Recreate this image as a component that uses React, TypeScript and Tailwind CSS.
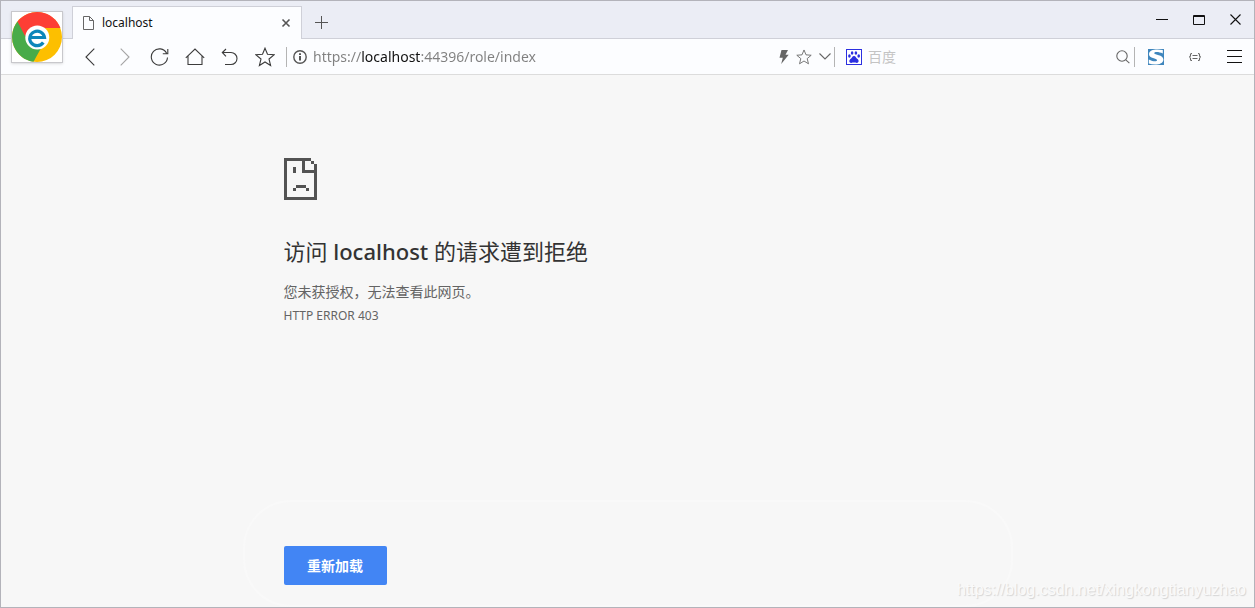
import type { ReactNode } from "react";

const toolbarIcon = {
  fill: "none",
  stroke: "currentColor",
  strokeWidth: 1.1,
  "aria-hidden": true,
} as const;

function BrowserLogo() {
  return (
    <svg viewBox="0 0 50 50" className="h-[50px] w-[50px]" aria-hidden="true">
      <circle cx="25" cy="25" r="25" fill="#fdbf00" />
      <path d="M25 25L14 20L5.5 9.5A25 25 0 0 0 21.5 49.8L33 29Z" fill="#48ab49" />
      <path d="M5.5 9.5A25 25 0 0 1 48.4 16H25L13 24Z" fill="#fd3e35" />
      <circle cx="25.3" cy="25.5" r="12" fill="#fff" />
      <path
        d="M17.5 25.5H32.5A7.4 7.2 0 1 0 31.3 30.5"
        fill="none"
        stroke="#0d86ba"
        strokeWidth="3.2"
      />
    </svg>
  );
}

function ToolButton({ label, children }: { label: string; children: ReactNode }) {
  return (
    <button
      type="button"
      aria-label={label}
      className="flex h-full w-[35px] items-center justify-center text-[#3c3c3c]"
    >
      {children}
    </button>
  );
}

function Star({ className }: { className: string }) {
  return (
    <svg viewBox="0 0 20 20" className={className} {...toolbarIcon}>
      <path d="M10 1.2L12.5 7.3L19 7.8L14 12L15.6 18.5L10 15L4.4 18.5L6 12L1 7.8L7.5 7.3Z" />
    </svg>
  );
}

function TabStrip() {
  return (
    <header className="flex h-[38px] items-stretch bg-[#ebedf5]">
      <div className="w-[71px] shrink-0 border-b border-[#cfd0d8]" />
      <div className="mt-[5px] flex w-[230px] shrink-0 items-center border-x border-t border-[#cfd0d8] bg-[#fcfdff] px-[10px]">
        <svg viewBox="0 0 11 14" className="h-[14px] w-[11px] text-[#666]" {...toolbarIcon} strokeWidth={1}>
          <path d="M.5 .5H6.5L10.5 4.5V13.5H.5ZM6.5 .5V4.5H10.5" />
        </svg>
        <span className="ml-2 flex-1 text-[12px] leading-4 text-[#111]">localhost</span>
        <button type="button" aria-label="关闭标签页" className="text-[#555]">
          <svg viewBox="0 0 10 10" className="h-[10px] w-[10px]" {...toolbarIcon} strokeWidth={1.6}>
            <path d="M1.5 1.5L8.5 8.5M8.5 1.5L1.5 8.5" />
          </svg>
        </button>
      </div>
      <div className="flex flex-1 items-center justify-between border-b border-[#cfd0d8] pl-[13px]">
        <button type="button" aria-label="新建标签页" className="mt-[6px] text-[#555]">
          <svg viewBox="0 0 13 13" className="h-[13px] w-[13px]" {...toolbarIcon} strokeWidth={1}>
            <path d="M6.5 0V13M0 6.5H13" />
          </svg>
        </button>
        <div className="flex items-center text-[#111]">
          <button type="button" aria-label="最小化" className="flex w-[37px] justify-center">
            <svg viewBox="0 0 12 12" className="h-3 w-3" {...toolbarIcon} strokeWidth={1}>
              <path d="M0 5.5H12" />
            </svg>
          </button>
          <button type="button" aria-label="最大化" className="flex w-[37px] justify-center">
            <svg viewBox="0 0 12 10" className="h-[10px] w-3" {...toolbarIcon} strokeWidth={1}>
              <path d="M.5 .5H11.5V9.5H.5ZM0 1.5H12" />
            </svg>
          </button>
          <button type="button" aria-label="关闭" className="flex w-[37px] justify-center">
            <svg viewBox="0 0 11 11" className="h-[11px] w-[11px]" {...toolbarIcon}>
              <path d="M.5 .5L10.5 10.5M10.5 .5L.5 10.5" />
            </svg>
          </button>
        </div>
      </div>
    </header>
  );
}

function Divider() {
  return <div className="h-5 w-px shrink-0 bg-[#b4b4b4]" />;
}

function Toolbar() {
  return (
    <div className="flex h-9 items-center border-b border-[#dcdcdc] bg-[#fcfdff] pl-[71px]">
      <nav className="flex h-full shrink-0 items-center" aria-label="导航">
        <ToolButton label="后退">
          <svg viewBox="0 0 10 18" className="h-[18px] w-[10px]" {...toolbarIcon}>
            <path d="M9.3 .7L1 9L9.3 17.3" />
          </svg>
        </ToolButton>
        <ToolButton label="前进">
          <svg viewBox="0 0 10 18" className="h-[18px] w-[10px] text-[#a5a5a5]" {...toolbarIcon}>
            <path d="M.7 .7L9 9L.7 17.3" />
          </svg>
        </ToolButton>
        <ToolButton label="刷新">
          <svg viewBox="0 0 19 18" className="h-[18px] w-[19px]" {...toolbarIcon}>
            <path d="M16.6 5.2A8.1 8.1 0 1 0 17.5 9.5M17.8 1V5.7H12.8" />
          </svg>
        </ToolButton>
        <ToolButton label="主页">
          <svg viewBox="0 0 20 18" className="h-[18px] w-5" {...toolbarIcon}>
            <path d="M.8 9.8L10 1L19.2 9.8M3 8V16.5H17V8" />
          </svg>
        </ToolButton>
        <ToolButton label="恢复">
          <svg viewBox="0 0 17 18" className="h-[18px] w-[17px]" {...toolbarIcon}>
            <path d="M5 1L1.3 4.5L5 8.3M1.3 4.5H10A6 6 0 0 1 10 16.5H4" />
          </svg>
        </ToolButton>
        <ToolButton label="收藏夹">
          <Star className="h-5 w-5" />
        </ToolButton>
      </nav>
      <div className="ml-1 flex">
        <Divider />
      </div>
      <button type="button" aria-label="网站信息" className="ml-[6px] shrink-0 text-[#555]">
        <svg viewBox="0 0 14 14" className="h-[14px] w-[14px]" {...toolbarIcon} strokeWidth={1.4}>
          <circle cx="7" cy="7" r="6.2" />
          <path d="M7 6V10.5M7 3.3V5" strokeWidth="2" />
        </svg>
      </button>
      {/* the host part of the address is drawn darker than the rest */}
      <input
        type="text"
        aria-label="地址"
        defaultValue="https://localhost:44396/role/index"
        className="ml-[6px] h-6 w-0 min-w-[240px] flex-1 bg-[linear-gradient(90deg,#808080_48px,#111_48px,#111_107px,#808080_107px)] bg-clip-text text-[14px] text-transparent outline-none"
      />
      <div className="flex shrink-0 items-center text-[#666]">
        <button type="button" aria-label="极速模式">
          <svg viewBox="0 0 10 14" className="h-[14px] w-[10px]" fill="currentColor" aria-hidden="true">
            <path d="M2.5 0H9L6.5 4.8H9.7L2.2 14L3.8 7.8H.5Z" />
          </svg>
        </button>
        <button type="button" aria-label="收藏" className="ml-[7px]">
          <Star className="h-4 w-4" />
        </button>
        <button type="button" aria-label="展开" className="ml-[7px]">
          <svg viewBox="0 0 12 7" className="h-[7px] w-3" {...toolbarIcon}>
            <path d="M.5 .5L6 6L11.5 .5" />
          </svg>
        </button>
      </div>
      <div className="ml-[3px] flex w-[301px] shrink-0 items-center">
        <Divider />
        <svg viewBox="0 0 16 16" className="ml-[11px] h-4 w-4 shrink-0" aria-hidden="true">
          <rect x=".5" y=".5" width="15" height="15" fill="#fff" stroke="#2b2fe0" />
          <g fill="#2b2fe0">
            <ellipse cx="3.4" cy="7" rx="1.3" ry="1.8" />
            <ellipse cx="6.1" cy="4" rx="1.3" ry="1.8" />
            <ellipse cx="9.9" cy="4" rx="1.3" ry="1.8" />
            <ellipse cx="12.7" cy="7" rx="1.3" ry="1.8" />
            <path d="M8 7C9.8 7 10 9 11.6 10.1C13.6 12 12.4 14 10.8 13.9C9 13.5 7 13.5 5.2 13.9C3.4 14 2.4 12 4.4 10.1C6 9 6.2 7 8 7Z" />
          </g>
        </svg>
        <input
          type="text"
          aria-label="搜索"
          placeholder="百度"
          className="ml-[6px] h-6 min-w-0 flex-1 bg-transparent text-[14px] outline-none placeholder:text-[#c4c4c4]"
        />
        <button type="button" aria-label="搜索" className="mr-1 text-[#666]">
          <svg viewBox="0 0 14 14" className="h-[14px] w-[14px]" {...toolbarIcon}>
            <circle cx="6" cy="6" r="5.2" />
            <path d="M9.8 9.8L13.4 13.2" />
          </svg>
        </button>
        <Divider />
      </div>
      <button type="button" aria-label="搜狗" className="ml-[13px] shrink-0">
        <svg viewBox="0 0 16 16" className="h-4 w-4" aria-hidden="true">
          <rect width="16" height="16" fill="#3f86bd" />
          <path
            d="M14.8 1V4.6C11 2.6 6.2 2.6 6.2 4.2C6.2 6 15.4 5.6 15.4 10.4C15.4 15.8 6.5 16.4 .8 14.4V10.4C5 12.6 9 12.8 9 11.2C9 9.2 1 9.4 1 5.2C1 .6 8 -.2 14.8 1Z"
            fill="#fff"
          />
        </svg>
      </button>
      <button type="button" aria-label="扩展" className="ml-6 shrink-0 text-[#666]">
        <svg viewBox="0 0 14 10" className="h-[10px] w-[14px]" {...toolbarIcon}>
          <path d="M4 1.5H3.5Q2.5 1.5 2.5 2.5V3.5Q2.5 5 1 5Q2.5 5 2.5 6.5V7.5Q2.5 8.5 3.5 8.5H4M10 1.5H10.5Q11.5 1.5 11.5 2.5V3.5Q11.5 5 13 5Q11.5 5 11.5 6.5V7.5Q11.5 8.5 10.5 8.5H10M4.5 3.5H9.5M4.5 6.5H9.5" />
        </svg>
      </button>
      <button type="button" aria-label="菜单" className="ml-[25px] mr-3 shrink-0 text-[#111]">
        <svg viewBox="0 0 15 13" className="h-[13px] w-[15px]" {...toolbarIcon} strokeWidth={1}>
          <path d="M0 .5H15M0 6.5H15M0 12.5H15" />
        </svg>
      </button>
    </div>
  );
}

function SadPage() {
  return (
    <svg
      viewBox="0 0 33 42"
      className="h-[42px] w-[33px]"
      fill="#535353"
      shapeRendering="crispEdges"
      aria-hidden="true"
    >
      <path d="M0 0H27V3H21V12H30V6H33V42H0ZM3 3V39H30V15H18V3Z" fillRule="evenodd" />
      <path d="M27 3H30V6H27ZM9 9H12V15H9ZM12 27H22V30H12ZM9 30H12V33H9ZM22 30H25V33H22Z" />
    </svg>
  );
}

export default function App() {
  return (
    <div className="relative flex min-h-screen flex-col border border-[#b3b3ba] bg-[#f7f7f7] font-['Noto_Sans','Noto_Sans_CJK_SC',sans-serif]">
      <TabStrip />
      <Toolbar />
      <div className="absolute left-[10px] top-[10px] border border-[#c8c8cc] bg-white shadow">
        <BrowserLogo />
      </div>

      <main className="mx-auto flex w-full max-w-[770px] flex-1 flex-col">
        <section className="px-[41px] pt-[83px]">
          <SadPage />
          <h1 className="mt-[35px] text-[22px] font-normal leading-8 text-[#333]">
            访问 <span className="font-medium">localhost</span> 的请求遭到拒绝
          </h1>
          <p className="mt-[13px] text-[14px] leading-6 text-[#646464]">您未获授权，无法查看此网页。</p>
          <p className="text-[12px] leading-6 text-[#646464]">HTTP ERROR 403</p>
        </section>
        <div className="mt-auto rounded-[48px] border-2 border-[#f9f9f9] px-[39px] pb-5 pt-11">
          <button
            type="button"
            className="h-[39px] w-[103px] rounded-[2px] bg-[#4285f4] text-[14px] font-bold text-white"
          >
            重新加载
          </button>
        </div>
      </main>

      <p className="absolute bottom-[5px] right-2 font-['Liberation_Sans',sans-serif] text-[16px] leading-6 text-[#fafafa] [text-shadow:1px_1px_1px_#d4d4d4]">
        https://blog.csdn.net/xingkongtianyuzhao
      </p>
    </div>
  );
}
